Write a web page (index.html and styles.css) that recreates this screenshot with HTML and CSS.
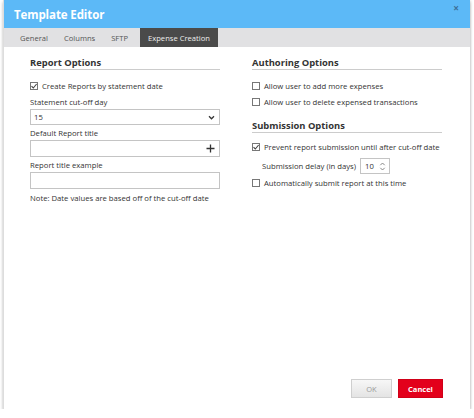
FILE: index.html
```html
<!DOCTYPE html>
<html>
<head>
<meta charset="utf-8">
<link rel="stylesheet" href="styles.css">
</head>
<body>
<div class="dialog">
  <div class="header">
    <span class="title">Template Editor</span>
    <span class="close">×</span>
  </div>
  <div class="tabs">
    <span class="tab">General</span>
    <span class="tab">Columns</span>
    <span class="tab">SFTP</span>
    <span class="tab active">Expense Creation</span>
  </div>
  <div class="body">
    <div class="col">
      <div class="sect">Report Options</div>
      <div class="row first"><span class="cb checked"><svg viewBox="0 0 8 8" width="8" height="8"><path d="M1.5 4.2 L3.3 6 L6.6 2" fill="none" stroke="#444" stroke-width="1.1"/></svg></span>Create Reports by statement date</div>
      <div class="label">Statement cut-off day</div>
      <div class="field select"><span>15</span><svg viewBox="0 0 8 6" width="7" height="5"><path d="M1 1.5 L4 4.5 L7 1.5" fill="none" stroke="#333" stroke-width="1.5"/></svg></div>
      <div class="label">Default Report title</div>
      <div class="field tall"><span></span><svg viewBox="0 0 9 9" width="9" height="9"><path d="M4.5 0.5 V8.5 M0.5 4.5 H8.5" stroke="#333" stroke-width="1.3"/></svg></div>
      <div class="label">Report title example</div>
      <div class="field tall"></div>
      <div class="note">Note: Date values are based off of the cut-off date</div>
    </div>
    <div class="col">
      <div class="sect">Authoring Options</div>
      <div class="row first"><span class="cb"></span>Allow user to add more expenses</div>
      <div class="row"><span class="cb"></span>Allow user to delete expensed transactions</div>
      <div class="sect second">Submission Options</div>
      <div class="row first2"><span class="cb checked"><svg viewBox="0 0 8 8" width="8" height="8"><path d="M1.5 4.2 L3.3 6 L6.6 2" fill="none" stroke="#444" stroke-width="1.1"/></svg></span>Prevent report submission until after cut-off date</div>
      <div class="delay">
        <span>Submission delay (in days)</span>
        <div class="spin"><span>10</span><svg viewBox="0 0 8 12" width="7" height="11"><path d="M1.5 4.5 L4 2 L6.5 4.5 M1.5 7.5 L4 10 L6.5 7.5" fill="none" stroke="#777" stroke-width="1"/></svg></div>
      </div>
      <div class="row"><span class="cb"></span>Automatically submit report at this time</div>
    </div>
  </div>
  <div class="footer">
    <button class="btn ok">OK</button>
    <button class="btn cancel">Cancel</button>
  </div>
</div>
</body>
</html>
```
FILE: styles.css
```css
html, body { margin: 0; padding: 0; background: #fff; }
body { font-family: "Open Sans", "Noto Sans", sans-serif; color: #333; }
.dialog {
  margin-left: 3px;
  width: 467px;
  height: 409px;
  display: flex;
  flex-direction: column;
  background: #fff;
  border-left: 1px solid #ddd;
  box-shadow: 0 2px 3px rgba(0,0,0,0.28), 1px 0 2px rgba(0,0,0,0.08);
  box-sizing: border-box;
}
.header {
  height: 28px;
  background: #5cb9f7;
  display: flex;
  align-items: center;
  justify-content: space-between;
  padding: 0 11px 0 10px;
}
.title { color: #fff; font-weight: 700; font-size: 11.5px; letter-spacing: -0.1px; }
.close { color: #3d6f96; font-size: 10px; font-weight: 700; margin-top: -12px; }
.tabs {
  height: 19px;
  background: #e1e1e3;
  display: flex;
  padding-left: 8px;
}
.tab {
  font-size: 7.6px;
  color: #555;
  padding: 0 8px;
  display: flex;
  align-items: center;
}
.tab.active { background: #4a4a4a; color: #eee; padding: 0 8px; margin-left: 4px; }
.body {
  flex: 1;
  display: flex;
  gap: 32px;
  padding: 10px 0 0 26px;
}
.col { width: 190px; display: flex; flex-direction: column; }
.sect {
  font-size: 9.4px;
  font-weight: 700;
  color: #333;
  line-height: 12px;
  border-bottom: 1px solid #ccc;
}
.sect.second { margin-top: 10px; }
.row {
  font-size: 7.7px;
  display: flex;
  align-items: center;
  height: 16px;
}
.row.first { margin-top: 8px; }
.row.first2 { margin-top: 6px; }
.cb {
  width: 8px; height: 8px;
  border: 1px solid #777;
  box-sizing: border-box;
  margin-right: 4px;
  display: flex; align-items: center; justify-content: center;
  background: #fff;
}
.cb svg { flex: none; }
.label { font-size: 7.7px; line-height: 14px; margin-top: 1px; }
.field {
  height: 16px;
  border: 1px solid #c4c4c4;
  box-sizing: border-box;
  display: flex;
  align-items: center;
  justify-content: space-between;
  padding: 0 4px 0 3px;
  font-size: 7.7px;
}
.field.tall { height: 17px; }
.note { font-size: 7.7px; margin-top: 3px; line-height: 12px; }
.delay {
  display: flex;
  align-items: center;
  font-size: 7.7px;
  padding-left: 10px;
  gap: 4px;
  height: 18px;
  margin-top: 2px;
}
.spin {
  width: 30px; height: 16px;
  border: 1px solid #c4c4c4;
  box-sizing: border-box;
  display: flex; align-items: center; justify-content: space-between;
  padding: 0 3px 0 4px;
}
.footer {
  display: flex;
  justify-content: flex-end;
  gap: 6px;
  padding: 0 27px 11px 0;
}
.btn {
  height: 19px;
  font-family: "Open Sans", sans-serif;
  font-size: 7.5px;
  padding: 0;
  box-sizing: border-box;
}
.ok {
  width: 41px;
  background: linear-gradient(#f7f7f7, #e4e4e4);
  border: 1px solid #cfcfcf;
  color: #999;
}
.cancel {
  width: 45px;
  background: #e3001b;
  border: 1px solid #d00018;
  color: #fff;
  font-weight: 700;
}
```
